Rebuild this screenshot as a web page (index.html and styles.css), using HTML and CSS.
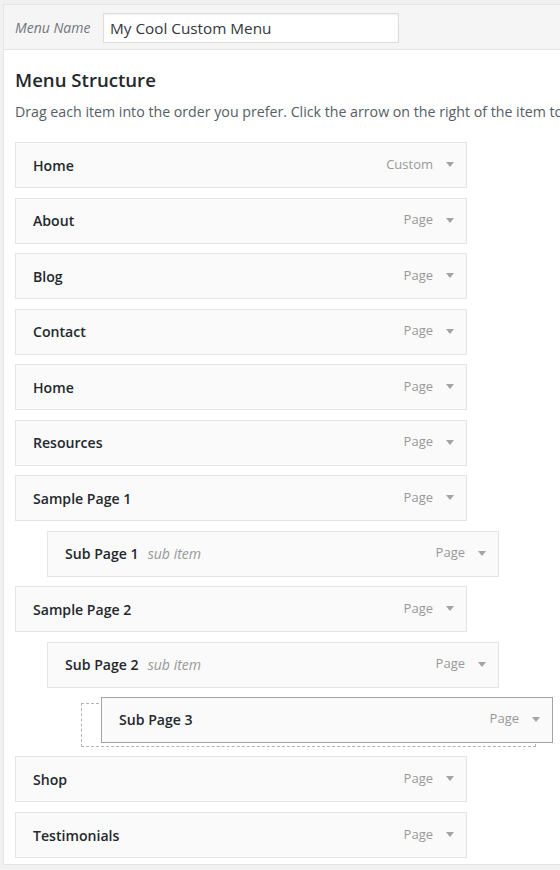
FILE: index.html
```html
<!DOCTYPE html>
<html>
<head>
<meta charset="utf-8">
<title>Menus</title>
<link rel="stylesheet" href="styles.css">
</head>
<body>
<div class="panel">
  <div class="header">
    <label class="name-label" for="menu-name">Menu Name</label>
    <input class="name-input" id="menu-name" type="text" value="My Cool Custom Menu">
  </div>
  <div class="content">
    <h3 class="title">Menu Structure</h3>
    <p class="desc">Drag each item into the order you prefer. Click the arrow on the right of the item to reveal additional configuration options.</p>
    <ul class="menu">
      <li class="item"><div class="bar"><span class="item-title">Home</span><span class="controls"><span class="type">Custom</span><svg class="arrow" viewBox="0 0 8 5" width="8" height="5"><path d="M0 0H8L4 5Z"/></svg></span></div></li>
      <li class="item"><div class="bar"><span class="item-title">About</span><span class="controls"><span class="type">Page</span><svg class="arrow" viewBox="0 0 8 5" width="8" height="5"><path d="M0 0H8L4 5Z"/></svg></span></div></li>
      <li class="item"><div class="bar"><span class="item-title">Blog</span><span class="controls"><span class="type">Page</span><svg class="arrow" viewBox="0 0 8 5" width="8" height="5"><path d="M0 0H8L4 5Z"/></svg></span></div></li>
      <li class="item"><div class="bar"><span class="item-title">Contact</span><span class="controls"><span class="type">Page</span><svg class="arrow" viewBox="0 0 8 5" width="8" height="5"><path d="M0 0H8L4 5Z"/></svg></span></div></li>
      <li class="item"><div class="bar"><span class="item-title">Home</span><span class="controls"><span class="type">Page</span><svg class="arrow" viewBox="0 0 8 5" width="8" height="5"><path d="M0 0H8L4 5Z"/></svg></span></div></li>
      <li class="item"><div class="bar"><span class="item-title">Resources</span><span class="controls"><span class="type">Page</span><svg class="arrow" viewBox="0 0 8 5" width="8" height="5"><path d="M0 0H8L4 5Z"/></svg></span></div></li>
      <li class="item"><div class="bar"><span class="item-title">Sample Page 1</span><span class="controls"><span class="type">Page</span><svg class="arrow" viewBox="0 0 8 5" width="8" height="5"><path d="M0 0H8L4 5Z"/></svg></span></div></li>
      <li class="item depth-1"><div class="bar"><span class="item-title">Sub Page 1<span class="sub">sub item</span></span><span class="controls"><span class="type">Page</span><svg class="arrow" viewBox="0 0 8 5" width="8" height="5"><path d="M0 0H8L4 5Z"/></svg></span></div></li>
      <li class="item"><div class="bar"><span class="item-title">Sample Page 2</span><span class="controls"><span class="type">Page</span><svg class="arrow" viewBox="0 0 8 5" width="8" height="5"><path d="M0 0H8L4 5Z"/></svg></span></div></li>
      <li class="item depth-1"><div class="bar"><span class="item-title">Sub Page 2<span class="sub">sub item</span></span><span class="controls"><span class="type">Page</span><svg class="arrow" viewBox="0 0 8 5" width="8" height="5"><path d="M0 0H8L4 5Z"/></svg></span></div></li>
      <li class="placeholder">
        <div class="bar dragging"><span class="item-title">Sub Page 3</span><span class="controls"><span class="type">Page</span><svg class="arrow" viewBox="0 0 8 5" width="8" height="5"><path d="M0 0H8L4 5Z"/></svg></span></div>
      </li>
      <li class="item after-placeholder"><div class="bar"><span class="item-title">Shop</span><span class="controls"><span class="type">Page</span><svg class="arrow" viewBox="0 0 8 5" width="8" height="5"><path d="M0 0H8L4 5Z"/></svg></span></div></li>
      <li class="item"><div class="bar"><span class="item-title">Testimonials</span><span class="controls"><span class="type">Page</span><svg class="arrow" viewBox="0 0 8 5" width="8" height="5"><path d="M0 0H8L4 5Z"/></svg></span></div></li>
    </ul>
  </div>
</div>
</body>
</html>
```

FILE: styles.css
```css
html, body {
  margin: 0;
  padding: 0;
}
body {
  background: #f1f1f1;
  font-family: "Open Sans", "Liberation Sans", sans-serif;
  font-size: 13px;
  color: #23282d;
  overflow: hidden;
  width: 560px;
  height: 870px;
}
.panel {
  margin: 4px 0 0 3px;
  width: 620px;
  background: #fff;
  border-top: 1px solid #e5e5e5;
  border-left: 1px solid #e5e5e5;
  border-bottom: 1px solid #e5e5e5;
}
.header {
  height: 44px;
  display: flex;
  align-items: center;
  padding-left: 11px;
  background: #f5f5f5;
  border-bottom: 1px solid #e3e3e3;
}
.name-label {
  font-style: italic;
  color: #72777c;
  font-size: 14px;
  width: 88px;
}
.name-input {
  box-sizing: border-box;
  width: 296px;
  height: 30px;
  margin: 2px 0 0 0;
  padding: 0 6px;
  border: 1px solid #dddddd;
  box-shadow: inset 0 1px 2px rgba(0, 0, 0, 0.07);
  background: #fff;
  font-family: "Open Sans", "Liberation Sans", sans-serif;
  font-size: 15.3px;
  color: #32373c;
  outline: none;
}
.content {
  padding: 0 0 6px 11px;
}
.title {
  margin: 17px 0 0;
  font-size: 18.6px;
  line-height: 26px;
  font-weight: 600;
  color: #23282d;
}
.desc {
  margin: 9px 0 0;
  line-height: 20px;
  font-size: 14.2px;
  color: #555d66;
  white-space: nowrap;
}
.menu {
  list-style: none;
  margin: 20px 0 0;
  padding: 0;
}
.item {
  margin-top: 9.56px;
}
.item:first-child {
  margin-top: 0;
}
.item.depth-1 {
  margin-left: 32px;
}
.bar {
  box-sizing: border-box;
  width: 452px;
  height: 46px;
  display: flex;
  align-items: center;
  justify-content: space-between;
  padding: 0 12px 0 17px;
  background: #fafafa;
  border: 1px solid #e5e5e5;
}
.item-title {
  font-weight: 600;
  font-size: 14.1px;
  color: #23282d;
}
.sub {
  font-weight: 400;
  font-style: italic;
  color: #999;
  margin-left: 9px;
}
.controls {
  display: flex;
  align-items: center;
  margin-top: -3px;
}
.type {
  font-size: 13px;
  color: #999;
}
.arrow {
  fill: #a0a5aa;
  margin-left: 13px;
  margin-top: 2px;
}
.placeholder {
  position: relative;
  box-sizing: border-box;
  margin: 15px 0 2px 66px;
  width: 455px;
  height: 44px;
  border: 1px dashed #b4b4b4;
}
.bar.dragging {
  position: absolute;
  left: 19px;
  top: -7px;
  border-color: #a3a3a3;
}
.after-placeholder {
  margin-top: 9.56px;
}
```
